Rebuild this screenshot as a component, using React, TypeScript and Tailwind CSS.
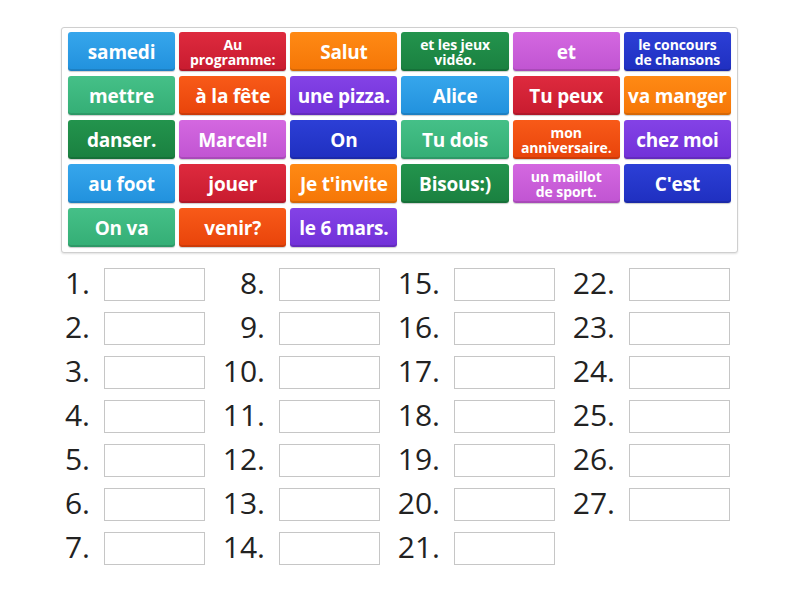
import React from "react";

type Tile = { t: string[]; c: string };

const C = {
  blue: "bg-linear-to-b from-[#36a6ec] to-[#2191dd]",
  red: "bg-linear-to-b from-[#de2a3e] to-[#c81b2f]",
  orange: "bg-linear-to-b from-[#ff8a14] to-[#f57606]",
  dkgreen: "bg-linear-to-b from-[#23944d] to-[#1a8040]",
  pink: "bg-linear-to-b from-[#d468e0] to-[#c054d2]",
  dkblue: "bg-linear-to-b from-[#2c3fd6] to-[#1f2fc0]",
  ltgreen: "bg-linear-to-b from-[#45c088] to-[#34ae75]",
  orred: "bg-linear-to-b from-[#f85a18] to-[#e8430a]",
  purple: "bg-linear-to-b from-[#8442e6] to-[#7130d8]",
};

const tiles: Tile[] = [
  { t: ["samedi"], c: C.blue },
  { t: ["Au", "programme:"], c: C.red },
  { t: ["Salut"], c: C.orange },
  { t: ["et les jeux", "vidéo."], c: C.dkgreen },
  { t: ["et"], c: C.pink },
  { t: ["le concours", "de chansons"], c: C.dkblue },
  { t: ["mettre"], c: C.ltgreen },
  { t: ["à la fête"], c: C.orred },
  { t: ["une pizza."], c: C.purple },
  { t: ["Alice"], c: C.blue },
  { t: ["Tu peux"], c: C.red },
  { t: ["va manger"], c: C.orange },
  { t: ["danser."], c: C.dkgreen },
  { t: ["Marcel!"], c: C.pink },
  { t: ["On"], c: C.dkblue },
  { t: ["Tu dois"], c: C.ltgreen },
  { t: ["mon", "anniversaire."], c: C.orred },
  { t: ["chez moi"], c: C.purple },
  { t: ["au foot"], c: C.blue },
  { t: ["jouer"], c: C.red },
  { t: ["Je t'invite"], c: C.orange },
  { t: ["Bisous:)"], c: C.dkgreen },
  { t: ["un maillot", "de sport."], c: C.pink },
  { t: ["C'est"], c: C.dkblue },
  { t: ["On va"], c: C.ltgreen },
  { t: ["venir?"], c: C.orred },
  { t: ["le 6 mars."], c: C.purple },
];

const columns = [
  [1, 2, 3, 4, 5, 6, 7],
  [8, 9, 10, 11, 12, 13, 14],
  [15, 16, 17, 18, 19, 20, 21],
  [22, 23, 24, 25, 26, 27],
];

export default function App() {
  return (
    <div
      className="w-[800px] h-[600px] bg-white overflow-hidden"
      style={{ fontFamily: '"Open Sans", "Noto Sans", sans-serif' }}
    >
      <div className="ml-[61px] mt-[27px] w-[677px] h-[226px] border border-[#cfcfcf] rounded-[3px] bg-white shadow-[0_1px_2px_rgba(0,0,0,0.12)] pt-[4px] px-[6px]">
        <div className="grid grid-cols-6 gap-x-[4px] gap-y-[5px]">
          {tiles.map((tile, i) => (
            <div
              key={i}
              className={`${tile.c} h-[39px] rounded-[3px] flex flex-col items-center justify-center text-center text-white font-bold shadow-[inset_0_-2px_0_rgba(0,0,0,0.12),0_1px_1px_rgba(0,0,0,0.2)] whitespace-nowrap overflow-hidden`}
            >
              {tile.t.length > 1 ? (
                <>
                  <span className="block text-[14px] leading-[15px] tracking-[-0.1px]">{tile.t[0]}</span>
                  <span className="block text-[14px] leading-[15px] tracking-[-0.1px]">{tile.t[1]}</span>
                </>
              ) : (
                <span className="block text-[19px] leading-[22px] tracking-[-0.2px]">{tile.t[0]}</span>
              )}
            </div>
          ))}
        </div>
      </div>

      <div className="flex ml-[44px] mt-[15px] gap-x-[14px]">
        {columns.map((col, ci) => (
          <div key={ci} className="flex flex-col gap-y-[11px]">
            {col.map((n) => (
              <div key={n} className="flex items-start h-[33px]">
                <div className="w-[46px] text-right text-[30px] leading-[29px] text-[#222] whitespace-nowrap">
                  {n}.
                </div>
                <div className="ml-[14px] w-[101px] h-[33px] border border-[#c6c6c6] bg-white" />
              </div>
            ))}
          </div>
        ))}
      </div>
    </div>
  );
}
